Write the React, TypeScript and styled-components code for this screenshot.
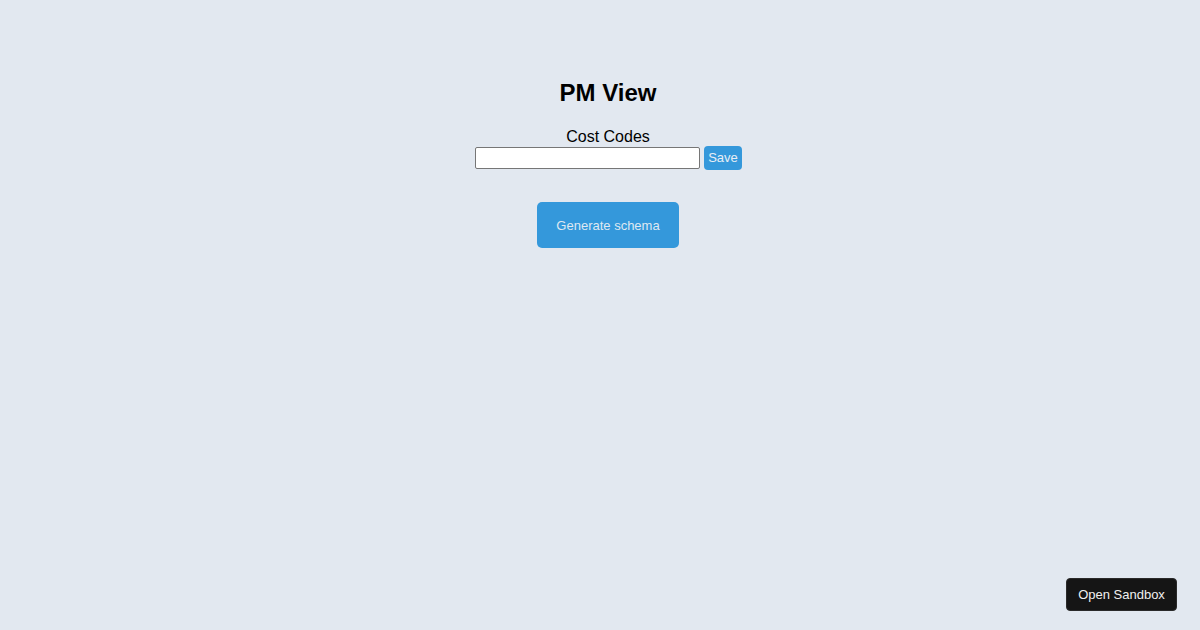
import React from "react";
import styled, { createGlobalStyle } from "styled-components";

const GlobalStyle = createGlobalStyle`
  html, body {
    margin: 0;
    padding: 0;
    background-color: #e2e8f0;
    font-family: "Liberation Sans", Arial, sans-serif;
  }
`;

function App() {
  return (
    <>
      <GlobalStyle />
      <Page>
        <Title>PM View</Title>
        <Field>
          <Label htmlFor="cost-codes">Cost Codes</Label>
          <InputRow>
            <TextInput id="cost-codes" type="text" />
            <SmallBtn>Save</SmallBtn>
          </InputRow>
        </Field>
        <MainBtn>Generate schema</MainBtn>
      </Page>
      <SandboxBtn>Open Sandbox</SandboxBtn>
    </>
  );
}

export default App;

const Page = styled.div`
  min-height: 630px;
  box-sizing: border-box;
  padding: 79px 0 0 16px;
  display: flex;
  flex-direction: column;
  align-items: center;
`;

const Title = styled.h1`
  margin: 0;
  font-size: 24px;
  font-weight: 700;
  line-height: 28px;
  color: #000;
`;

const Field = styled.div`
  margin-top: 20px;
  display: flex;
  flex-direction: column;
  align-items: center;
`;

const Label = styled.label`
  font-size: 16px;
  line-height: 19px;
  color: #000;
`;

const InputRow = styled.div`
  display: flex;
  align-items: center;
  gap: 4px;
  margin-left: 1px;
`;

const TextInput = styled.input`
  box-sizing: border-box;
  width: 225px;
  height: 22px;
  margin: 0;
  padding: 1px 2px;
  border: 1px solid #767676;
  border-radius: 2px;
  background: #fff;
  font-family: "Liberation Sans", Arial, sans-serif;
  font-size: 13px;
`;

const SmallBtn = styled.button`
  box-sizing: border-box;
  height: 24px;
  padding: 0 4px 1px;
  border: none;
  border-radius: 4px;
  background-color: #3498db;
  color: #e8eef5;
  font-family: "Liberation Sans", Arial, sans-serif;
  font-size: 13px;
  cursor: pointer;
`;

const MainBtn = styled.button`
  box-sizing: border-box;
  margin-top: 32px;
  width: 142px;
  height: 46px;
  border: none;
  border-radius: 5px;
  background-color: #3498db;
  color: #dfe8f2;
  font-family: "Liberation Sans", Arial, sans-serif;
  font-size: 13px;
  cursor: pointer;
`;

const SandboxBtn = styled.button`
  position: fixed;
  right: 23px;
  bottom: 19px;
  box-sizing: border-box;
  width: 111px;
  height: 33px;
  border: 1px solid #2a2a2a;
  border-radius: 4px;
  background-color: #151515;
  color: #f0f0f0;
  font-family: "Liberation Sans", Arial, sans-serif;
  font-size: 13px;
  cursor: pointer;
`;
